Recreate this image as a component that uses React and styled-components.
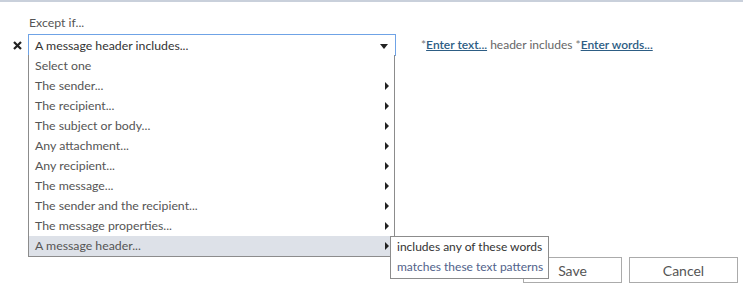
import React from "react";
import styled, { createGlobalStyle } from "styled-components";

const GlobalStyle = createGlobalStyle`
  html, body {
    margin: 0;
    padding: 0;
    background: #ffffff;
  }
  body {
    font-family: "Segoe UI", Lato, "Open Sans", sans-serif;
    font-size: 12.3px;
    color: #444444;
  }
`;

const Page = styled.div`
  position: relative;
  width: 743px;
  height: 287px;
  overflow: hidden;
`;

const TopRule = styled.div`
  height: 2px;
  background: #c9d0db;
`;

const Section = styled.div`
  padding: 11px 0 0 28px;
  height: 244px;
`;

const Label = styled.div`
  height: 21px;
  line-height: 20px;
  color: #555555;
  padding-left: 1px;
`;

const ConditionRow = styled.div`
  position: relative;
  display: flex;
  align-items: flex-start;
  gap: 25px;
`;

const RemoveBtn = styled.span`
  position: absolute;
  left: -15px;
  top: 7px;
  width: 9px;
  height: 9px;
  display: flex;
`;

const SelectWrap = styled.div`
  position: relative;
  width: 368px;
`;

const SelectBox = styled.div`
  box-sizing: border-box;
  height: 22px;
  border: 1px solid #6fa3e6;
  display: flex;
  align-items: center;
  justify-content: space-between;
  padding: 0 7px 0 6px;
  color: #333333;
`;

const DownCaret = styled.span`
  width: 0;
  height: 0;
  border-left: 4px solid transparent;
  border-right: 4px solid transparent;
  border-top: 5px solid #222222;
  margin-top: 2px;
`;

const List = styled.div`
  position: absolute;
  left: 0;
  top: 21px;
  width: 367px;
  box-sizing: border-box;
  border: 1px solid #8c8c8c;
  border-top: none;
  background: #ffffff;
  padding-top: 1px;
  z-index: 2;
`;

const Item = styled.div`
  position: relative;
  height: 20px;
  line-height: 20px;
  padding-left: 6px;
  color: #555555;
  background: ${(p) => (p.$active ? "#dde1e8" : "transparent")};
`;

const RightCaret = styled.span`
  position: absolute;
  right: 5px;
  top: 6px;
  width: 0;
  height: 0;
  border-top: 4px solid transparent;
  border-bottom: 4px solid transparent;
  border-left: 4px solid #222222;
`;

const SubMenu = styled.div`
  position: absolute;
  left: 362px;
  top: 202px;
  box-sizing: border-box;
  width: 159px;
  border: 1px solid #8c8c8c;
  background: #ffffff;
  padding: 1px 0 0;
  z-index: 3;
`;

const SubItem = styled.div`
  height: 20px;
  line-height: 18px;
  padding: 0 6px;
  white-space: nowrap;
  font-size: 12px;
  color: ${(p) => (p.$muted ? "#51628a" : "#333333")};
`;

const Summary = styled.div`
  color: #666666;
  white-space: nowrap;
  font-size: 12px;
  line-height: 22px;
`;

const Star = styled.span`
  color: #777777;
`;

const LinkText = styled.a`
  color: #2d5d84;
  font-weight: 600;
  text-decoration: underline;
`;

const Footer = styled.div`
  display: flex;
  justify-content: flex-end;
  gap: 7px;
  padding-right: 5px;
`;

const Button = styled.button`
  box-sizing: border-box;
  width: ${(p) => p.$w}px;
  height: 26px;
  background: #ffffff;
  border: 1px solid #ababab;
  color: #555555;
  font-family: inherit;
  font-size: 14px;
  padding: 0;
`;

const menu = [
  "Select one",
  "The sender...",
  "The recipient...",
  "The subject or body...",
  "Any attachment...",
  "Any recipient...",
  "The message...",
  "The sender and the recipient...",
  "The message properties...",
  "A message header...",
];

export default function App() {
  return (
    <Page>
      <GlobalStyle />
      <TopRule />
      <Section>
        <Label>Except if...</Label>
        <ConditionRow>
          <RemoveBtn>
            <svg width="9" height="9" viewBox="0 0 9 9">
              <path d="M1 1 L8 8 M8 1 L1 8" stroke="#222" strokeWidth="2.2" />
            </svg>
          </RemoveBtn>
          <SelectWrap>
            <SelectBox>
              <span>A message header includes...</span>
              <DownCaret />
            </SelectBox>
            <List>
              {menu.map((m, i) => (
                <Item key={m} $active={i === menu.length - 1}>
                  {m}
                  {i > 0 && <RightCaret />}
                </Item>
              ))}
            </List>
            <SubMenu>
              <SubItem>includes any of these words</SubItem>
              <SubItem $muted>matches these text patterns</SubItem>
            </SubMenu>
          </SelectWrap>
          <Summary>
            <Star>*</Star>
            <LinkText>Enter text...</LinkText> header includes <Star>*</Star>
            <LinkText>Enter words...</LinkText>
          </Summary>
        </ConditionRow>
      </Section>
      <Footer>
        <Button $w={99}>Save</Button>
        <Button $w={109}>Cancel</Button>
      </Footer>
    </Page>
  );
}
